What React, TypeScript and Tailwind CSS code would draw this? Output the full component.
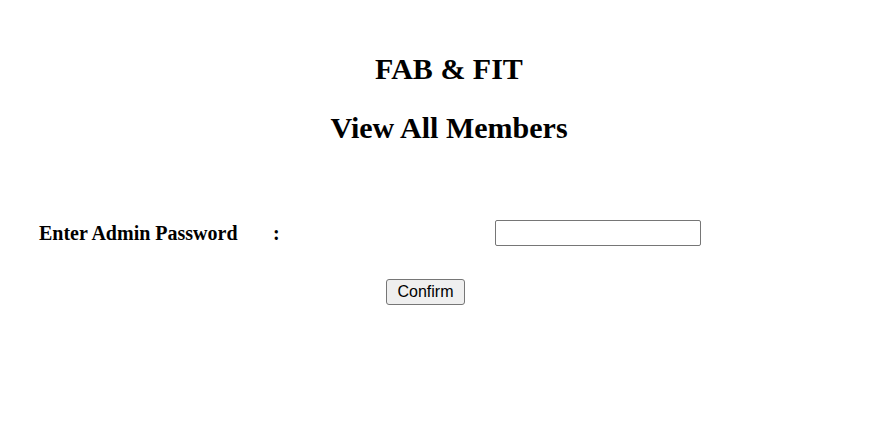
export default function App() {
  return (
    <div className="min-h-[428px] bg-white text-black font-['Liberation_Serif',serif]">
      {/* Title block */}
      <div className="pl-[29px] pt-[52px] text-center">
        <h1 className="text-[30px] font-bold leading-[34px]">FAB &amp; FIT</h1>
        <h2 className="mt-[25px] text-[30px] font-bold leading-[34px]">View All Members</h2>
      </div>

      {/* Password form */}
      <form className="mt-[73px]" onSubmit={(e) => e.preventDefault()}>
        <div className="flex items-center pl-[39px]">
          <label htmlFor="pwd" className="w-[234px] text-[20px] font-bold">
            Enter Admin Password
          </label>
          <span className="w-[222px] text-[20px] font-bold">:</span>
          <input
            id="pwd"
            type="password"
            className="h-[26px] w-[206px] border border-[#767676] rounded-[2px] bg-white px-1"
          />
        </div>
        <div className="mt-[31px] pl-[386px]">
          <button
            type="submit"
            className="h-[26px] w-[79px] border border-[#767676] rounded-[3px] bg-[#efefef] font-['Liberation_Sans',sans-serif] text-[16px] leading-none"
          >
            Confirm
          </button>
        </div>
      </form>
    </div>
  );
}
